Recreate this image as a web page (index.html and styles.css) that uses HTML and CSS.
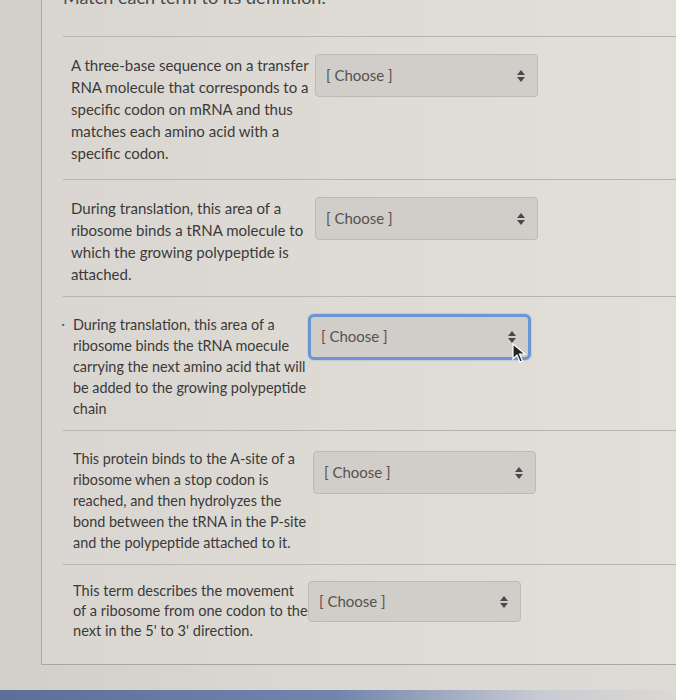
FILE: index.html
```html
<!DOCTYPE html>
<html lang="en">
<head>
  <meta charset="UTF-8" />
  <title>Match each term to its definition</title>
  <link rel="stylesheet" href="styles.css">
</head>
<body>

  <div class="panel">
    <h2 class="prompt">Match each term to its definition.</h2>

    <div class="match-row">
      <p class="term">A three-base sequence on a transfer RNA molecule that corresponds to a specific codon on mRNA and thus matches each amino acid with a specific codon.</p>
      <div class="picker">
        <span>[ Choose ]</span>
        <svg class="arrows" width="8" height="12" viewBox="0 0 8 12"><path d="M4 0 L8 5 H0 Z M0 7 H8 L4 12 Z" /></svg>
      </div>
    </div>

    <div class="match-row short">
      <p class="term">During translation, this area of a ribosome binds a tRNA molecule to which the growing polypeptide is attached.</p>
      <div class="picker">
        <span>[ Choose ]</span>
        <svg class="arrows" width="8" height="12" viewBox="0 0 8 12"><path d="M4 0 L8 5 H0 Z M0 7 H8 L4 12 Z" /></svg>
      </div>
    </div>

    <div class="match-row tight">
      <span class="bullet">·</span>
      <p class="term">During translation, this area of a ribosome binds the tRNA moecule carrying the next amino acid that will be added to the growing polypeptide chain</p>
      <div class="picker focused">
        <span>[ Choose ]</span>
        <svg class="arrows" width="8" height="12" viewBox="0 0 8 12"><path d="M4 0 L8 5 H0 Z M0 7 H8 L4 12 Z" /></svg>
        <!-- mouse pointer resting on the arrows -->
        <svg class="pointer" width="14" height="20" viewBox="0 0 14 20"><path d="M1 1 V16 L5 12 L8 19 L10.5 18 L7.5 11 H13 Z" fill="#222" stroke="#fff" stroke-width="1.2"/></svg>
      </div>
    </div>

    <div class="match-row tight lower">
      <p class="term">This protein binds to the A-site of a ribosome when a stop codon is reached, and then hydrolyzes the bond between the tRNA in the P-site and the polypeptide attached to it.</p>
      <div class="picker">
        <span>[ Choose ]</span>
        <svg class="arrows" width="8" height="12" viewBox="0 0 8 12"><path d="M4 0 L8 5 H0 Z M0 7 H8 L4 12 Z" /></svg>
      </div>
    </div>

    <div class="match-row last">
      <p class="term">This term describes the movement of a ribosome from one codon to the next in the 5' to 3' direction.</p>
      <div class="picker">
        <span>[ Choose ]</span>
        <svg class="arrows" width="8" height="12" viewBox="0 0 8 12"><path d="M4 0 L8 5 H0 Z M0 7 H8 L4 12 Z" /></svg>
      </div>
    </div>
  </div>

  <div class="taskbar"></div>

</body>
</html>
```

FILE: styles.css
```css
* {
  margin: 0;
  padding: 0;
  box-sizing: border-box;
}

body {
  width: 676px;
  height: 700px;
  overflow: hidden;
  background: linear-gradient(to right, #d2cec9, #dad6d1 40%, #dedbd5);
  color: #3b3a39;
  font-family: Lato, "Open Sans", sans-serif;
  position: relative;
}

/* Question panel, runs off the right edge */
.panel {
  margin-left: 41px;
  margin-top: -22px;
  width: 660px;
  height: 687px;
  border-left: 1px solid #a9a5a0;
  border-bottom: 1px solid #a9a5a0;
  background: linear-gradient(to right, #d9d6d1, #dfdcd6 60%, #e3e0da);
}

.prompt {
  margin-left: 21px;
  padding-top: 9px;
  height: 59px;
  font-size: 18px;
  font-weight: 400;
  line-height: 20px;
  color: #4a4947;
  border-bottom: 1px solid #b8b4af;
}

.match-row {
  position: relative;
  display: flex;
  align-items: flex-start;
  margin-left: 21px;
  padding: 17px 0 15px 8px;
  border-bottom: 1px solid #b8b4af;
}

.match-row.short {
  padding-bottom: 11px;
}

.match-row.tight {
  padding-bottom: 11px;
}

.match-row.lower .picker {
  margin-top: 3px;
}

.match-row.last {
  border-bottom: none;
  padding: 16px 0 0 10px;
}

.term {
  width: 242px;
  font-size: 15px;
  line-height: 22px;
  color: #3b3a39;
}

.tight .term {
  width: 240px;
  padding-left: 2px;
  font-size: 14.4px;
  line-height: 21px;
}

.last .term {
  width: 235px;
  font-size: 14.6px;
  line-height: 20px;
}

.bullet {
  position: absolute;
  left: -2px;
  top: 16px;
  font-size: 16px;
  color: #666;
}

/* Fake dropdown */
.picker {
  position: relative;
  width: 223px;
  height: 43px;
  margin-left: 2px;
  display: flex;
  align-items: center;
  justify-content: space-between;
  padding: 0 12px 0 10px;
  background: #d1cdc8;
  border: 1px solid #bdb9b4;
  border-radius: 4px;
  font-size: 15px;
  color: #555351;
}

.picker span {
  margin-top: -2px;
}

.last .picker {
  width: 213px;
  height: 41px;
  margin-left: 0;
}

.picker.focused {
  margin-left: -3px;
  height: 46px;
  border: 3px solid #6b95d4;
  border-radius: 6px;
  box-shadow: 0 0 2px rgba(80, 130, 210, 0.6);
}

.arrows path {
  fill: #4a4a4a;
}

.pointer {
  position: absolute;
  right: 2px;
  top: 26px;
}

.taskbar {
  position: absolute;
  left: 0;
  bottom: 0;
  width: 100%;
  height: 10px;
  background: linear-gradient(to right, #5c6f9a, #7285ad 50%, #c9cbd3 80%, #dcd9d4);
}
```
